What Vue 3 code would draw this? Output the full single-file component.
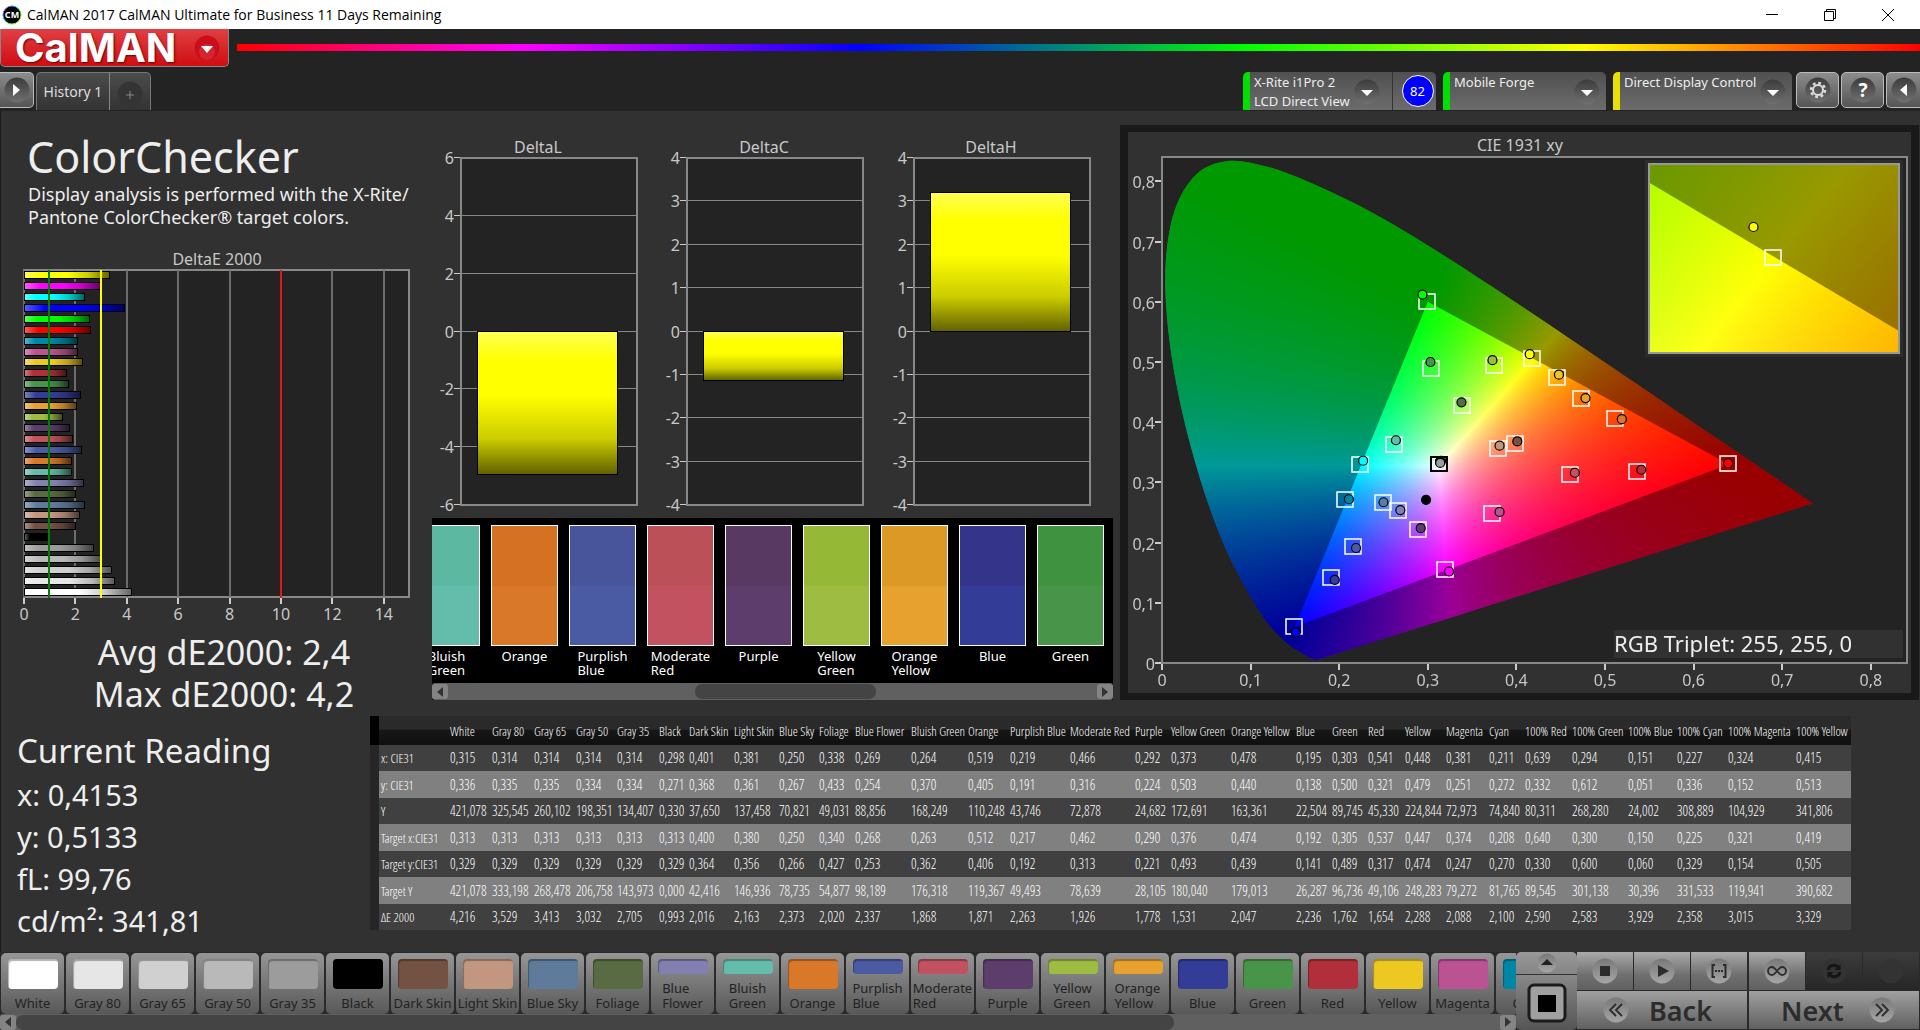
<script setup>
import { onMounted, ref } from 'vue'

const patches = [
  { name: 'White', color: '#ffffff', width: 42, v: ['0,315', '0,336', '421,078', '0,313', '0,329', '421,078', '4,216'] },
  { name: 'Gray 80', color: '#e6e6e6', width: 42, v: ['0,314', '0,335', '325,545', '0,313', '0,329', '333,198', '3,529'] },
  { name: 'Gray 65', color: '#d0d0d0', width: 42, v: ['0,314', '0,335', '260,102', '0,313', '0,329', '268,478', '3,413'] },
  { name: 'Gray 50', color: '#b9b9b9', width: 41, v: ['0,314', '0,334', '198,351', '0,313', '0,329', '206,758', '3,032'] },
  { name: 'Gray 35', color: '#9c9c9c', width: 42, v: ['0,314', '0,334', '134,407', '0,313', '0,329', '143,973', '2,705'] },
  { name: 'Black', color: '#000000', width: 30, v: ['0,298', '0,271', '0,330', '0,313', '0,329', '0,000', '0,993'] },
  { name: 'Dark Skin', color: '#735244', width: 45, v: ['0,401', '0,368', '37,650', '0,400', '0,364', '42,416', '2,016'] },
  { name: 'Light Skin', color: '#c39681', width: 45, v: ['0,381', '0,361', '137,458', '0,380', '0,356', '146,936', '2,163'] },
  { name: 'Blue Sky', color: '#5e7b9c', width: 40, v: ['0,250', '0,267', '70,821', '0,250', '0,266', '78,735', '2,373'] },
  { name: 'Foliage', color: '#596b42', width: 36, v: ['0,338', '0,433', '49,031', '0,340', '0,427', '54,877', '2,020'] },
  { name: 'Blue Flower', color: '#8380b1', width: 56, v: ['0,269', '0,254', '88,856', '0,268', '0,253', '98,189', '2,337'] },
  { name: 'Bluish Green', color: '#64bdaa', shade: '#5cb8a0', width: 57, v: ['0,264', '0,370', '168,249', '0,263', '0,362', '176,318', '1,868'] },
  { name: 'Orange', color: '#d97828', shade: '#d47122', width: 42, v: ['0,519', '0,405', '110,248', '0,512', '0,406', '119,367', '1,871'] },
  { name: 'Purplish Blue', color: '#4a5ba4', shade: '#49559b', width: 60, v: ['0,219', '0,191', '43,746', '0,217', '0,192', '49,493', '2,263'] },
  { name: 'Moderate Red', color: '#c2525f', shade: '#bc5058', width: 65, v: ['0,466', '0,316', '72,878', '0,462', '0,313', '78,639', '1,926'] },
  { name: 'Purple', color: '#5c3d6b', shade: '#573962', width: 36, v: ['0,292', '0,224', '24,682', '0,290', '0,221', '28,105', '1,778'] },
  { name: 'Yellow Green', color: '#9ebb42', shade: '#95b836', width: 60, v: ['0,373', '0,503', '172,691', '0,376', '0,493', '180,040', '1,531'] },
  { name: 'Orange Yellow', color: '#e6a12e', shade: '#dc9925', width: 65, v: ['0,478', '0,440', '163,361', '0,474', '0,439', '179,013', '2,047'] },
  { name: 'Blue', color: '#333c96', shade: '#34348a', width: 36, v: ['0,195', '0,138', '22,504', '0,192', '0,141', '26,287', '2,236'] },
  { name: 'Green', color: '#48954a', shade: '#3f923f', width: 36, v: ['0,303', '0,500', '89,745', '0,305', '0,489', '96,736', '1,762'] },
  { name: 'Red', color: '#b02f3a', width: 37, v: ['0,541', '0,321', '45,330', '0,537', '0,317', '49,106', '1,654'] },
  { name: 'Yellow', color: '#ecc820', width: 41, v: ['0,448', '0,479', '224,844', '0,447', '0,474', '248,283', '2,288'] },
  { name: 'Magenta', color: '#bb5292', width: 43, v: ['0,381', '0,251', '72,973', '0,374', '0,247', '79,272', '2,088'] },
  { name: 'Cyan', color: '#0087a5', width: 36, v: ['0,211', '0,272', '74,840', '0,208', '0,270', '81,765', '2,100'] },
  { name: '100% Red', color: '#ff0000', width: 47, v: ['0,639', '0,332', '80,311', '0,640', '0,330', '89,545', '2,590'] },
  { name: '100% Green', color: '#00ff00', width: 56, v: ['0,294', '0,612', '268,280', '0,300', '0,600', '301,138', '2,583'] },
  { name: '100% Blue', color: '#0000ff', width: 49, v: ['0,151', '0,051', '24,002', '0,150', '0,060', '30,396', '3,929'] },
  { name: '100% Cyan', color: '#00ffff', width: 51, v: ['0,227', '0,336', '308,889', '0,225', '0,329', '331,533', '2,358'] },
  { name: '100% Magenta', color: '#ff00ff', width: 68, v: ['0,324', '0,152', '104,929', '0,321', '0,154', '119,941', '3,015'] },
  { name: '100% Yellow', color: '#ffff00', width: 57, v: ['0,415', '0,513', '341,806', '0,419', '0,505', '390,682', '3,329'] },
]
const rowLabels = ['x: CIE31', 'y: CIE31', 'Y', 'Target x:CIE31', 'Target y:CIE31', 'Target Y', 'ΔE 2000']
const num = (s) => parseFloat(s.replace(',', '.'))

// DeltaE 2000 bars, last patch on top
const deltaE = [...patches].reverse().map((p, i) => ({
  color: p.color,
  y: Math.round(30 + i * 10.93) - 4,
  w: Math.round(num(p.v[6]) * 25.7),
}))
const deltaETicks = [0, 2, 4, 6, 8, 10, 12, 14]

const deltaCharts = [
  { title: 'DeltaL', x: 29, max: 6, step: 2, from: 0, to: -4.96 },
  { title: 'DeltaC', x: 255, max: 4, step: 1, from: 0, to: -1.15 },
  { title: 'DeltaH', x: 482, max: 4, step: 1, from: 3.2, to: 0 },
].map((c) => {
  const py = (v) => Math.round(23 + ((c.max - v) / (2 * c.max)) * 347)
  const ticks = []
  for (let v = c.max; v >= -c.max; v -= c.step) ticks.push({ v, y: py(v) })
  return { ...c, ticks, top: py(c.from), height: py(c.to) - py(c.from) }
})

const strip = patches.slice(11, 20)
const picker = patches.slice(0, 24)
const breakable = new Set(['Blue Flower', 'Bluish Green', 'Purplish Blue', 'Moderate Red', 'Yellow Green', 'Orange Yellow'])
const lines = (name) => (breakable.has(name) ? name.split(' ') : [name])

// CIE 1931 chart
const OX = 34
const OY = 531
const SX = 886
const SY = 602
const cx = (x) => OX + x * SX
const cy = (y) => OY - y * SY
const markers = patches.map((p) => ({
  name: p.name,
  color: p.color,
  x: cx(num(p.v[0])),
  y: cy(num(p.v[1])),
  tx: Math.round(cx(num(p.v[3]))) - 9,
  ty: Math.round(cy(num(p.v[4]))) - 8,
}))
const targets = markers.filter((m) => !['White', 'Gray 80', 'Gray 65', 'Gray 50', 'Gray 35', 'Black'].includes(m.name))
const xTicks = [0, 0.1, 0.2, 0.3, 0.4, 0.5, 0.6, 0.7, 0.8]
const label = (v) => String(v).replace('.', ',')

const locus = [
  [0.1741, 0.005], [0.1644, 0.0109], [0.1566, 0.0177], [0.144, 0.0297], [0.1241, 0.0578],
  [0.1096, 0.0868], [0.0913, 0.1327], [0.0687, 0.2007], [0.0454, 0.295], [0.0235, 0.4127],
  [0.0082, 0.5384], [0.0039, 0.6548], [0.0139, 0.7502], [0.0389, 0.812], [0.0743, 0.8338],
  [0.1142, 0.8262], [0.1547, 0.8059], [0.2296, 0.7543], [0.3016, 0.6923], [0.3731, 0.6245],
  [0.4441, 0.5547], [0.5125, 0.4866], [0.5752, 0.4242], [0.627, 0.3725], [0.6915, 0.3083], [0.7347, 0.2653],
]
const gamut = [[0.64, 0.33], [0.3, 0.6], [0.15, 0.06]]

function colorField(w, h, toXY) {
  const c = document.createElement('canvas')
  c.width = w
  c.height = h
  const ctx = c.getContext('2d')
  const img = ctx.createImageData(w, h)
  for (let j = 0; j < h; j++) {
    for (let i = 0; i < w; i++) {
      const [x, y0] = toXY(i, j)
      const y = Math.max(y0, 0.0001)
      const z = 1 - x - y
      const rgb = [
        3.2406 * x - 1.5372 * y - 0.4986 * z,
        -0.9689 * x + 1.8758 * y + 0.0415 * z,
        0.0557 * x - 0.204 * y + 1.057 * z,
      ].map((n) => Math.max(n, 0))
      const m = Math.max(...rgb) || 1
      const k = (j * w + i) * 4
      rgb.forEach((n, q) => { img.data[k + q] = (255 * n) / m })
      img.data[k + 3] = 255
    }
  }
  ctx.putImageData(img, 0, 0)
  return c
}

function paint(canvas, toXY, toPx, clipLocus) {
  const { width: w, height: h } = canvas
  const field = colorField(w, h, toXY)
  const ctx = canvas.getContext('2d')
  const pts = locus.map(toPx)
  ctx.save()
  if (clipLocus) {
    // Catmull-Rom spline through the spectral locus
    const at = (i) => pts[Math.min(Math.max(i, 0), pts.length - 1)]
    ctx.beginPath()
    ctx.moveTo(...pts[0])
    for (let i = 0; i < pts.length - 1; i++) {
      const [a, b, c, d] = [at(i - 1), at(i), at(i + 1), at(i + 2)]
      ctx.bezierCurveTo(
        b[0] + (c[0] - a[0]) / 6, b[1] + (c[1] - a[1]) / 6,
        c[0] - (d[0] - b[0]) / 6, c[1] - (d[1] - b[1]) / 6,
        c[0], c[1],
      )
    }
    ctx.closePath()
    ctx.clip()
  }
  ctx.drawImage(field, 0, 0)
  ctx.fillStyle = 'rgba(0,0,0,.4)'
  ctx.fillRect(0, 0, w, h)
  ctx.restore()
  ctx.beginPath()
  gamut.map(toPx).forEach((p) => ctx.lineTo(...p))
  ctx.closePath()
  ctx.clip()
  ctx.drawImage(field, 0, 0)
}

const plot = ref(null)
const inset = ref(null)
onMounted(() => {
  paint(plot.value, (i, j) => [i / SX, (506 - j) / SY], ([x, y]) => [x * SX, 506 - y * SY], true)
  paint(
    inset.value,
    (i, j) => [0.419 + (i - 124) / 5000, 0.505 - (j - 94) / 3740],
    ([x, y]) => [124 + (x - 0.419) * 5000, 94 - (y - 0.505) * 3740],
    false,
  )
})
</script>

<template>
  <div class="window">
    <header class="titlebar">
      <svg class="app-icon" viewBox="0 0 20 20">
        <defs>
          <linearGradient id="ring" x1="0" y1="0" x2="1" y2="1">
            <stop offset="0" stop-color="#f0c" /><stop offset=".35" stop-color="#0af" />
            <stop offset=".65" stop-color="#3e3" /><stop offset="1" stop-color="#fd0" />
          </linearGradient>
          <linearGradient id="knob" x2="0" y2="1"><stop offset="0" stop-color="#3c3c3c" /><stop offset="1" stop-color="#707070" /></linearGradient>
          <linearGradient id="disc" x2="0" y2="1"><stop offset="0" stop-color="#787878" /><stop offset="1" stop-color="#a6a6a6" /></linearGradient>
        </defs>
        <circle cx="10" cy="10" r="9" fill="#000" stroke="url(#ring)" stroke-width="1" />
        <text x="10" y="13" text-anchor="middle" fill="#fff" font-size="9" font-weight="700">CM</text>
      </svg>
      <span class="title">CalMAN 2017 CalMAN Ultimate for Business 11 Days Remaining</span>
      <div class="win-buttons">
        <button aria-label="Minimize"><svg viewBox="0 0 14 14"><path d="M1 6.500h12" /></svg></button>
        <button aria-label="Restore"><svg viewBox="0 0 14 14"><path d="M1.500 3.500h9v9h-9zM3.500 3.500v-2h9v9h-2" /></svg></button>
        <button aria-label="Close"><svg viewBox="0 0 14 14"><path d="M1 1l12 12M13 1L1 13" /></svg></button>
      </div>
    </header>

    <div class="brandbar">
      <button class="brand">
        CalMAN
        <svg viewBox="0 0 26 26"><circle cx="13" cy="13" r="12.500" fill="#c8101c" /><circle cx="13" cy="17" r="8" fill="#e03a3e" opacity=".5" /><path d="M7 11h12l-6 7z" fill="#fff" /></svg>
      </button>
      <div class="rainbow"></div>
    </div>

    <nav class="tabs">
      <button class="square first" aria-label="Expand"><svg viewBox="0 0 26 26"><circle cx="13" cy="13" r="12.500" class="knob" /><path d="M9 7v12l7-6z" fill="#fff" /></svg></button>
      <div class="history">
        <button class="tab">History 1</button>
        <button class="add" aria-label="Add tab"><svg viewBox="0 0 26 26"><circle cx="13" cy="13" r="12.500" fill="#343434" /><path d="M13 10v8M9 14h8" stroke="#888" /></svg></button>
      </div>
      <div class="devices">
        <div class="device meter">
          <button class="pick"><span>X-Rite i1Pro 2<br />LCD Direct View</span><svg viewBox="0 0 26 26"><circle cx="13" cy="13" r="12.500" class="knob" /><path d="M7 11h12l-6 6z" fill="#fff" /></svg></button>
          <div class="count"><b>82</b></div>
        </div>
        <div class="device forge"><button class="pick"><span>Mobile Forge</span><svg viewBox="0 0 26 26"><circle cx="13" cy="13" r="12.500" class="knob" /><path d="M7 11h12l-6 6z" fill="#fff" /></svg></button></div>
        <div class="device display"><button class="pick"><span>Direct Display Control</span><svg viewBox="0 0 26 26"><circle cx="13" cy="13" r="12.500" class="knob" /><path d="M7 11h12l-6 6z" fill="#fff" /></svg></button></div>
        <button class="square" aria-label="Settings">
          <svg viewBox="0 0 26 26"><circle cx="13" cy="13" r="12.500" class="knob" /><circle cx="13" cy="13" r="5" fill="none" stroke="#ddd" stroke-width="2" /><circle cx="13" cy="13" r="7" fill="none" stroke="#ddd" stroke-width="2.500" stroke-dasharray="2.750 2.750" /></svg>
        </button>
        <button class="square" aria-label="Help"><svg viewBox="0 0 26 26"><circle cx="13" cy="13" r="12.500" class="knob" /><text x="13" y="20" text-anchor="middle" fill="#fff" font-size="19" font-weight="700">?</text></svg></button>
        <button class="square last" aria-label="Collapse"><svg viewBox="0 0 26 26"><circle cx="13" cy="13" r="12.500" class="knob" /><path d="M16 7v12l-7-6z" fill="#fff" /></svg></button>
      </div>
    </nav>

    <main>
      <div class="upper">
        <section class="summary">
          <h1>ColorChecker</h1>
          <p>Display analysis is performed with the X-Rite/<br />Pantone ColorChecker® target colors.</p>
          <svg class="chart" viewBox="0 0 432 383">
            <defs>
              <linearGradient id="sheen-x">
                <stop offset="0" stop-color="#fff" stop-opacity=".35" /><stop offset=".2" stop-color="#fff" stop-opacity="0" />
                <stop offset=".5" stop-color="#000" stop-opacity="0" /><stop offset=".75" stop-color="#000" stop-opacity=".2" /><stop offset="1" stop-color="#000" stop-opacity=".6" />
              </linearGradient>
            </defs>
            <text class="axis" x="217" y="20" text-anchor="middle">DeltaE 2000</text>
            <rect x="24" y="25" width="385" height="327" fill="#232323" stroke="#888" stroke-width="2" />
            <g v-for="t in deltaETicks" :key="t">
              <path :d="`M${Math.round(24 + t * 25.7)} 25v327`" stroke="#6c6c6c" stroke-width="2" />
              <path :d="`M${Math.round(24 + t * 25.7)} 353v6`" stroke="#ccc" stroke-width="2" />
              <text class="axis" :x="24 + t * 25.7" y="375" text-anchor="middle">{{ t }}</text>
            </g>
            <g v-for="(b, i) in deltaE" :key="i">
              <rect x="24" :y="b.y" :width="b.w" height="8" fill="#000" />
              <rect x="25" :y="b.y + 1" :width="b.w - 2" height="6" :fill="b.color" />
              <rect x="25" :y="b.y + 1" :width="b.w - 2" height="6" fill="url(#sheen-x)" />
            </g>
            <path d="M49 25v328" stroke="#008000" stroke-width="2" />
            <path d="M101 25v328" stroke="#ff0" stroke-width="2" />
            <path d="M281 25v328" stroke="#e01818" stroke-width="2" />
          </svg>
          <div class="stats">Avg dE2000: 2,4<br />Max dE2000: 4,2</div>
        </section>

        <section class="deltas">
          <svg class="chart" viewBox="0 0 681 383">
            <defs>
              <linearGradient id="yellow-y" x2="0" y2="1">
                <stop offset="0" stop-color="#ff5" /><stop offset=".2" stop-color="#ff0" /><stop offset=".45" stop-color="#ff0" />
                <stop offset=".75" stop-color="#cc0" /><stop offset="1" stop-color="#606000" />
              </linearGradient>
            </defs>
            <g v-for="c in deltaCharts" :key="c.title">
              <text class="axis" :x="c.x + 77" y="18" text-anchor="middle">{{ c.title }}</text>
              <rect :x="c.x" y="23" width="176" height="347" fill="#232323" />
              <g v-for="t in c.ticks" :key="t.v">
                <path :d="`M${c.x} ${t.y - 0.5}h176`" stroke="#888" />
                <path :d="`M${c.x - 7} ${t.y - 0.5}h7`" stroke="#ccc" />
                <text class="axis" :x="c.x - 7" :y="t.y + 6" text-anchor="end">{{ t.v }}</text>
              </g>
              <rect :x="c.x" y="23" width="176" height="347" fill="none" stroke="#888" stroke-width="2" />
              <rect :x="c.x + 16.5" :y="c.top - 0.5" width="140" :height="c.height" fill="url(#yellow-y)" stroke="#000" />
            </g>
          </svg>
          <div class="strip">
            <div class="swatches">
              <figure v-for="p in strip" :key="p.name">
                <div class="pair"><i :style="{ background: p.shade }"></i><i :style="{ background: p.color }"></i></div>
                <figcaption><span v-for="l in lines(p.name)" :key="l">{{ l }}</span></figcaption>
              </figure>
            </div>
            <div class="scroll">
              <button aria-label="Scroll left"><svg viewBox="0 0 8 12"><path d="M7 1v10L1 6z" fill="#333" /></svg></button>
              <div class="lane"><div class="thumb"></div></div>
              <button aria-label="Scroll right"><svg viewBox="0 0 8 12"><path d="M1 1v10l6-5z" fill="#333" /></svg></button>
            </div>
          </div>
        </section>

        <section class="cie">
          <svg class="chart" viewBox="0 0 783 561">
            <rect width="783" height="561" fill="#313131" />
            <text class="axis" x="392" y="19" text-anchor="middle">CIE 1931 xy</text>
            <rect :x="OX" y="25" width="745" height="506" fill="#232323" />
            <foreignObject :x="OX" y="25" width="745" height="506"><canvas ref="plot" width="745" height="506"></canvas></foreignObject>
            <rect :x="OX" y="25" width="745" height="506" fill="none" stroke="#888" stroke-width="2" />
            <g v-for="t in xTicks" :key="t">
              <path :d="`M${Math.round(cx(t))} 532v6`" stroke="#ccc" stroke-width="2" />
              <path :d="`M${OX - 7} ${Math.round(cy(t))}h6`" stroke="#ccc" stroke-width="2" />
              <text class="axis" :x="cx(t)" y="554" text-anchor="middle">{{ label(t) }}</text>
              <text class="axis" :x="OX - 7" :y="cy(t) + 7" text-anchor="end">{{ label(t) }}</text>
            </g>
            <g v-for="m in targets" :key="m.name">
              <rect :x="m.tx" :y="m.ty" width="16" height="15" fill="none" stroke="#fff" stroke-width="1.500" />
            </g>
            <rect :x="markers[0].tx + 1" :y="markers[0].ty" width="16" height="14" fill="none" stroke="#000" stroke-width="2" />
            <circle v-for="m in markers" :key="m.name" :cx="m.x" :cy="m.y" r="4.500" :fill="m.color" stroke="#000" stroke-width="1.200" />
            <circle :cx="markers[4].x" :cy="markers[4].y + 1" r="4.500" :fill="markers[4].color" stroke="#000" stroke-width="1.200" />

            <rect x="517" y="28" width="258" height="197" fill="#2d2d2d" />
            <foreignObject x="521" y="32" width="250" height="189"><canvas ref="inset" width="250" height="189"></canvas></foreignObject>
            <rect x="521" y="32" width="250" height="189" fill="none" stroke="#999" stroke-width="2" />
            <rect x="637" y="118" width="16" height="15" fill="none" stroke="#fff" stroke-width="1.500" />
            <circle cx="625.500" cy="95" r="4.500" fill="#ff0" stroke="#000" stroke-width="1.200" />
            <rect x="486" y="498" width="289" height="28" fill="#313131" />
            <text class="triplet" x="486" y="520">RGB Triplet: 255, 255, 0</text>
          </svg>
        </section>
      </div>

      <div class="lower">
        <section class="reading">
          <h2>Current Reading</h2>
          <div>x: 0,4153</div>
          <div>y: 0,5133</div>
          <div>fL: 99,76</div>
          <div>cd/m²: 341,81</div>
        </section>
        <div class="table-box">
          <table>
            <colgroup>
              <col style="width: 9px" /><col style="width: 69px" />
              <col v-for="p in patches" :key="p.name" :style="{ width: p.width + 'px' }" />
            </colgroup>
            <thead>
              <tr><th class="grip"></th><th></th><th v-for="p in patches" :key="p.name" scope="col">{{ p.name }}</th></tr>
            </thead>
            <tbody>
              <tr v-for="(r, i) in rowLabels" :key="r"><td class="grip"></td><th scope="row">{{ r }}</th><td v-for="p in patches" :key="p.name">{{ p.v[i] }}</td></tr>
            </tbody>
          </table>
        </div>
      </div>
    </main>

    <footer>
      <div class="picker">
        <div class="chips">
          <button v-for="p in picker" :key="p.name" class="chip">
            <i :style="{ background: p.color }"></i>
            <span class="name"><span v-for="l in lines(p.name)" :key="l">{{ l }}</span></span>
          </button>
        </div>
        <div class="scroll low">
          <button aria-label="Scroll left"><svg viewBox="0 0 8 12"><path d="M7 1v10L1 6z" fill="#333" /></svg></button>
          <div class="lane"><div class="thumb"></div></div>
          <button aria-label="Scroll right"><svg viewBox="0 0 8 12"><path d="M1 1v10l6-5z" fill="#333" /></svg></button>
        </div>
      </div>
      <div class="pattern">
        <button class="up" aria-label="Show more"><svg viewBox="0 0 20 20"><circle cx="10" cy="10" r="9.500" class="disc" /><path d="M4 12h12l-6-6z" fill="#222" /></svg></button>
        <button class="window-size" aria-label="Pattern window">
          <svg viewBox="0 0 40 40"><rect x="2" y="2" width="36" height="36" rx="5" fill="#a0a0a0" stroke="#1c1c1c" stroke-width="3" /><rect x="11" y="12" width="18" height="17" fill="#000" /></svg>
        </button>
      </div>
      <div class="transport">
        <div class="row">
          <button aria-label="Stop"><svg viewBox="0 0 26 26"><circle cx="13" cy="13" r="12.500" class="disc" /><rect x="8" y="8" width="10" height="10" fill="#2c2c2c" /></svg></button>
          <button aria-label="Play"><svg viewBox="0 0 26 26"><circle cx="13" cy="13" r="12.500" class="disc" /><path d="M9 7v12l11-6z" fill="#2c2c2c" /></svg></button>
          <button aria-label="Read series"><svg viewBox="0 0 26 26"><circle cx="13" cy="13" r="12.500" class="disc" /><path d="M9 7H6.500v12H9M17 7h2.500v12H17" fill="none" stroke="#2c2c2c" stroke-width="2" /><path d="M9 13h8" stroke="#2c2c2c" stroke-width="2" stroke-dasharray="2 1" /></svg></button>
          <button class="split" aria-label="Continuous"><svg viewBox="0 0 26 26"><circle cx="13" cy="13" r="12.500" class="disc" /><path d="M13 13C11 10.500 9.500 9 8 9a4 4 0 0 0 0 8c1.500 0 3-1.500 5-4s3.500-4 5-4a4 4 0 0 1 0 8c-1.500 0-3-1.500-5-4z" fill="none" stroke="#2c2c2c" stroke-width="1.800" /></svg></button>
          <button class="off" aria-label="Refresh"><svg viewBox="0 0 26 26"><circle cx="13" cy="13" r="12.500" class="dim" /><path d="M7 12c1-5 7-6 10-3M19 14c-1 5-7 6-10 3" fill="none" stroke="#151515" stroke-width="3" /><path d="M19.500 6v6h-6zM6.500 20v-6h6z" fill="#151515" /></svg></button>
          <button class="off" aria-label="Blank"><svg viewBox="0 0 26 26"><circle cx="13" cy="13" r="12.500" class="dim" /></svg></button>
        </div>
        <div class="row nav">
          <button><svg viewBox="0 0 26 26"><circle cx="13" cy="13" r="12.500" class="disc" /><path d="M13 7l-6 6 6 6M19 7l-6 6 6 6" fill="none" stroke="#2c2c2c" stroke-width="1.800" /></svg>Back</button>
          <button class="split">Next<svg viewBox="0 0 26 26"><circle cx="13" cy="13" r="12.500" class="disc" /><path d="M7 7l6 6-6 6M13 7l6 6-6 6" fill="none" stroke="#2c2c2c" stroke-width="1.800" /></svg></button>
        </div>
      </div>
    </footer>
  </div>
</template>

<style>
body { background: #232323; }
</style>

<style scoped>
.window { display: flex; flex-direction: column; min-height: 100vh; overflow: hidden; background: #232323; color: #eee; font-family: "Noto Sans", "Open Sans", sans-serif; font-size: 15px; }
button { font: inherit; color: inherit; border: 0; padding: 0; margin: 0; background: none; }
svg { display: block; flex: none; }
h1, h2, p, figure { margin: 0; font-weight: 400; }
i { display: block; }

.titlebar { display: flex; align-items: center; height: 29px; background: #fff; color: #000; }
.app-icon { width: 20px; height: 20px; margin: 0 5px 0 2px; }
.title { font-family: "Open Sans", sans-serif; font-size: 14px; }
.win-buttons { display: flex; margin: 0 3px 0 auto; }
.win-buttons button { width: 58px; display: flex; justify-content: center; }
.win-buttons svg { width: 14px; height: 14px; fill: none; stroke: #000; }

.brandbar { display: flex; height: 38px; }
.brand { display: flex; align-items: center; justify-content: space-between; width: 229px; box-sizing: border-box; padding: 0 8px 0 14px; border: 1px solid #888; border-top: 0; border-radius: 0 0 5px 5px; background: linear-gradient(#e04044, #d00d12); color: #fff; font: 700 40px/36px Inter, sans-serif; text-shadow: 1px 1px 2px #600; }
.brand svg { width: 26px; height: 26px; }
.rainbow { flex: 1; height: 7px; margin: 15px 0 0 8px; background: linear-gradient(90deg, #f00, #f0f 17%, #00f 37%, #0f0 60%, #ff0 80%, #f00); }

.tabs { display: flex; align-items: flex-start; padding-top: 5px; height: 39px; }
.knob { fill: url(#knob); }
.square { width: 43px; height: 36px; box-sizing: border-box; display: flex; align-items: center; justify-content: center; border: 1px solid #bbb; border-radius: 5px; background: linear-gradient(#8c8c8c, #555); margin-left: 2px; }
.square svg, .pick svg, .add svg { width: 26px; height: 26px; }
.square.first { width: 34px; margin: 0 2px 0 0; border-left: 0; border-radius: 0 5px 5px 0; }
.square.last { width: 34px; border-right: 0; border-radius: 5px 0 0 5px; justify-content: flex-start; padding-left: 4px; }
.history { display: flex; height: 38px; box-sizing: border-box; border: 1px solid #777; border-bottom: 0; border-radius: 5px 5px 0 0; background: linear-gradient(#4c4c4c, #333); font-size: 14px; }
.tab { width: 73px; border-right: 1px solid #888; color: #ddd; }
.add { width: 40px; display: flex; justify-content: center; padding-top: 8px; }
.devices { display: flex; margin-left: auto; }
.device { display: flex; height: 38px; margin-right: 7px; border-radius: 5px 5px 0 0; border-left: 7px solid #00e000; background: linear-gradient(#505050, #6c6c6c); box-sizing: border-box; font-size: 13px; line-height: 19px; overflow: hidden; }
.meter { width: 193px; }
.meter .pick { padding-right: 12px; }
.forge { width: 163px; }
.display { width: 179px; border-left-color: #e8e000; margin-right: 2px; }
.pick { flex: 1; min-width: 0; display: flex; justify-content: space-between; align-items: flex-start; text-align: left; padding: 1px 6px 0 4px; white-space: nowrap; }
.pick svg { margin-top: 6px; }
.count { width: 44px; box-sizing: border-box; display: flex; align-items: center; justify-content: center; padding-left: 6px; border-left: 1px solid #333; }
.count b { width: 30px; height: 30px; border: 1px solid #fff; border-radius: 50%; background: #00f; color: #fff; font-weight: 400; font-size: 13px; line-height: 30px; text-align: center; }

main { flex: 1; display: flex; flex-direction: column; background: #313131; box-shadow: inset 1px 0 #1c1c1c; }
.upper { display: grid; grid-template-columns: minmax(0, 432fr) minmax(0, 688fr) minmax(0, 800fr); align-items: start; }
.chart { width: 100%; height: auto; }
.axis { fill: #c8c8c8; font-size: 16px; }
.summary h1 { font-size: 43px; line-height: 48px; padding: 22px 0 0 27px; }
.summary p { font-size: 18px; line-height: 23px; padding: 2px 0 16px 28px; white-space: nowrap; }
.stats { font-size: 34px; line-height: 42px; text-align: center; padding: 3px 0 0 16px; }
.deltas { padding: 24px 7px 0 0; }
.strip { background: #000; }
.swatches { display: flex; justify-content: flex-end; gap: 11px; height: 165px; padding: 7px 9px 0 0; box-sizing: border-box; overflow: hidden; }
.swatches figure { width: 67px; flex: none; display: flex; flex-direction: column; align-items: center; }
.pair { width: 67px; height: 121px; box-sizing: border-box; border: 1px solid #fff; display: flex; flex-direction: column; }
.pair i { flex: 1; }
figcaption { display: flex; flex-direction: column; padding-top: 3px; font-size: 13px; line-height: 14px; color: #fff; }
.scroll { display: flex; align-items: center; height: 17px; background: #606060; border-radius: 3px; }
.scroll button { width: 16px; height: 15px; display: flex; align-items: center; justify-content: center; background: #848484; border-radius: 3px; }
.scroll svg { width: 8px; height: 12px; }
.lane { flex: 1; height: 15px; }
.thumb { width: 28%; height: 15px; margin-left: 38%; border-radius: 7px; background: #444; }
.cie { margin: 14px 1px 0 0; padding: 7px 8px; background: #191919; }
.cie .chart { display: block; }
.cie canvas { display: block; }
.triplet { fill: #eee; font-size: 22px; }

.lower { display: flex; flex: 1; }
.reading { width: 370px; flex: none; box-sizing: border-box; padding: 12px 0 0 17px; font-size: 29px; line-height: 42px; }
.reading h2 { font-size: 33px; line-height: 47px; }
.table-box { padding-top: 1px; overflow: hidden; }
table { table-layout: fixed; width: 1481px; border-collapse: collapse; font-family: "Open Sans Condensed Light", "Open Sans Condensed", "Noto Sans", sans-serif; font-size: 14px; line-height: 18px; color: #fff; white-space: nowrap; }
th, td { padding: 0 0 0 2px; text-align: left; font-weight: 400; }
th { font-size: 13px; }
thead tr { height: 29px; background: linear-gradient(#2a2a2a 45%, #161616 50%, #101010); }
tbody tr { height: 26px; background: #404040; }
tbody tr:nth-child(even) { height: 27px; background: #808080; }
.grip { background: #262626; }
thead .grip { background: #000; }

footer { display: flex; height: 78px; background: #2a2a2a; }
.picker { flex: 1; min-width: 0; }
.chips { display: flex; gap: 2px; height: 62px; padding: 1px 0 0 1px; box-sizing: border-box; overflow: hidden; }
.chip { flex: none; width: 63px; height: 61px; display: flex; flex-direction: column; align-items: center; border-radius: 5px; background: linear-gradient(#969696, #585858); color: #222; font-size: 13px; line-height: 15px; padding: 6px 0 3px; box-sizing: border-box; }
.chip i { width: 50px; flex: 1; max-height: 30px; border-radius: 4px; box-shadow: inset 1px 2px 1px rgba(0, 0, 0, .3); }
.name { display: flex; flex-direction: column; margin-top: auto; padding-top: 7px; text-align: left; white-space: nowrap; }
.scroll.low { height: 16px; }
.low .thumb { width: 78%; margin-left: 0; }
.pattern { width: 61px; display: flex; flex-direction: column; }
.pattern button { display: flex; align-items: center; justify-content: center; background: linear-gradient(#999, #858585); }
.pattern .up { height: 23px; border-radius: 5px 5px 0 0; border-bottom: 1px solid #333; }
.pattern .window-size { flex: 1; background: linear-gradient(#888, #555); border-radius: 0 0 5px 5px; }
.up svg { width: 20px; height: 20px; }
.window-size svg { width: 40px; height: 40px; }
.disc { fill: url(#disc); }
.dim { fill: #333; }
.transport { width: 342px; margin-right: 1px; display: flex; flex-direction: column; gap: 1px; }
.row { display: flex; gap: 1px; height: 38px; }
.row button { flex: 1 1 0; min-width: 0; box-sizing: border-box; display: flex; align-items: center; justify-content: center; background: linear-gradient(#aaa, #707070 60%, #606060); }
.row .off { background: linear-gradient(#3c3c3c, #262626); }
.row svg { width: 26px; height: 26px; }
.row .split { margin-left: 1px; }
.row.nav button { flex: 1 1 50%; justify-content: flex-start; gap: 20px; padding-left: 26px; color: #2c2c2c; font-size: 27px; font-weight: 600; background: linear-gradient(#a0a0a0, #606060); }
.row.nav .split { gap: 25px; padding-left: 32px; }
</style>
